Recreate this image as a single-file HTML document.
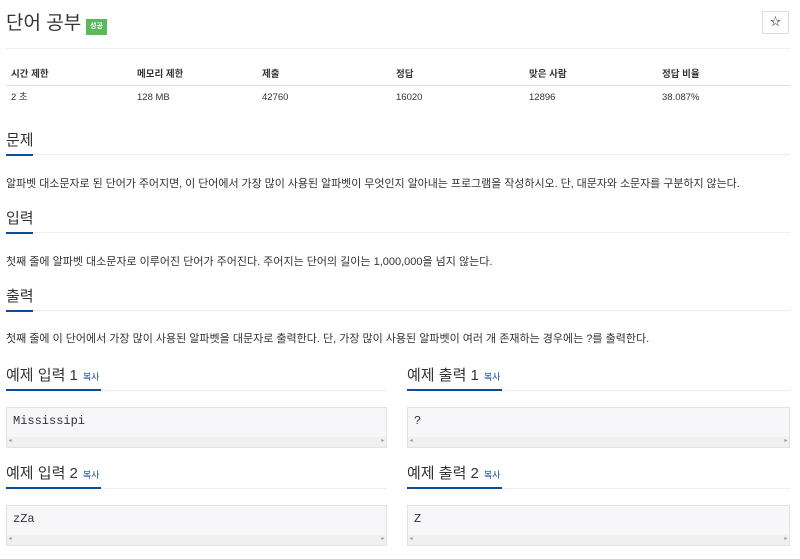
<!DOCTYPE html>
<html><head><meta charset="utf-8"><style>
*{margin:0;padding:0;box-sizing:border-box}
body{width:800px;height:559px;overflow:hidden;background:#fff;font-family:"Liberation Sans","Noto Sans CJK KR",sans-serif;color:#333;position:relative}
.a{position:absolute;white-space:nowrap}
.h{font-size:15px;color:#333;line-height:20px}
.ul{position:absolute;height:2px;background:#0d4c9c}
.gl{position:absolute;height:1px;background:#eee}
.t{font-size:11px;color:#333;line-height:16px}
.th{font-size:9.5px;font-weight:bold;line-height:12px}
.td{font-size:9.5px;line-height:12px}
.box{position:absolute;background:#f7f7f9;border:1px solid #e1e1e8;height:41px}
.box .c{position:absolute;left:6px;top:6px;font-family:"Liberation Mono",monospace;font-size:12px;color:#333}
.box .sb{position:absolute;left:0;right:0;bottom:0;height:10px;background:#f0f0f0;font-size:6px;color:#999}
.cp{font-size:9px;color:#0d4c9c;margin-left:5px}
</style></head><body>
<div class="a" style="left:6px;top:11px;font-size:19px;line-height:26px;color:#333">단어 공부</div>
<div class="a" style="left:86px;top:19px;background:#5cb85c;color:#fff;font-size:7px;font-weight:bold;padding:3px 4px;line-height:10px">성공</div>
<div class="a" style="left:762px;top:11px;width:27px;height:23px;border:1px solid #ddd;text-align:center;font-size:11px;line-height:21px">☆</div>
<div class="gl" style="left:6px;top:48px;width:784px"></div>
<div class="a th" style="left:11px;top:69px">시간 제한</div>
<div class="a th" style="left:137px;top:69px">메모리 제한</div>
<div class="a th" style="left:262px;top:69px">제출</div>
<div class="a th" style="left:396px;top:69px">정답</div>
<div class="a th" style="left:529px;top:69px">맞은 사람</div>
<div class="a th" style="left:662px;top:69px">정답 비율</div>
<div class="gl" style="left:6px;top:85px;width:784px;background:#ddd"></div>
<div class="a td" style="left:11px;top:92px">2 초</div>
<div class="a td" style="left:137px;top:92px">128 MB</div>
<div class="a td" style="left:262px;top:92px">42760</div>
<div class="a td" style="left:396px;top:92px">16020</div>
<div class="a td" style="left:529px;top:92px">12896</div>
<div class="a td" style="left:662px;top:92px">38.087%</div>

<div class="a h" style="left:6px;top:131px">문제</div>
<div class="gl" style="left:6px;top:154px;width:784px"></div><div class="ul" style="left:6px;top:154px;width:27px"></div>
<div class="a t" style="left:6px;top:176px;letter-spacing:-0.05px">알파벳 대소문자로 된 단어가 주어지면, 이 단어에서 가장 많이 사용된 알파벳이 무엇인지 알아내는 프로그램을 작성하시오. 단, 대문자와 소문자를 구분하지 않는다.</div>

<div class="a h" style="left:6px;top:209px">입력</div>
<div class="gl" style="left:6px;top:232px;width:784px"></div><div class="ul" style="left:6px;top:232px;width:27px"></div>
<div class="a t" style="left:6px;top:254px">첫째 줄에 알파벳 대소문자로 이루어진 단어가 주어진다. 주어지는 단어의 길이는 1,000,000을 넘지 않는다.</div>

<div class="a h" style="left:6px;top:287px">출력</div>
<div class="gl" style="left:6px;top:310px;width:784px"></div><div class="ul" style="left:6px;top:310px;width:27px"></div>
<div class="a t" style="left:6px;top:331px">첫째 줄에 이 단어에서 가장 많이 사용된 알파벳을 대문자로 출력한다. 단, 가장 많이 사용된 알파벳이 여러 개 존재하는 경우에는 ?를 출력한다.</div>

<div class="a h" style="left:6px;top:366px">예제 입력 1<span class="cp">복사</span></div>
<div class="gl" style="left:6px;top:390px;width:381px"></div><div class="ul" style="left:6px;top:389px;width:95px"></div>
<div class="box" style="left:6px;top:407px;width:381px"><div class="c">Mississipi</div><div class="sb">&nbsp;◂<span style="float:right">▸&nbsp;</span></div></div>
<div class="a h" style="left:407px;top:366px">예제 출력 1<span class="cp">복사</span></div>
<div class="gl" style="left:407px;top:390px;width:383px"></div><div class="ul" style="left:407px;top:389px;width:95px"></div>
<div class="box" style="left:407px;top:407px;width:383px"><div class="c">?</div><div class="sb">&nbsp;◂<span style="float:right">▸&nbsp;</span></div></div>

<div class="a h" style="left:6px;top:464px">예제 입력 2<span class="cp">복사</span></div>
<div class="gl" style="left:6px;top:488px;width:381px"></div><div class="ul" style="left:6px;top:487px;width:95px"></div>
<div class="box" style="left:6px;top:505px;width:381px"><div class="c">zZa</div><div class="sb">&nbsp;◂<span style="float:right">▸&nbsp;</span></div></div>
<div class="a h" style="left:407px;top:464px">예제 출력 2<span class="cp">복사</span></div>
<div class="gl" style="left:407px;top:488px;width:383px"></div><div class="ul" style="left:407px;top:487px;width:95px"></div>
<div class="box" style="left:407px;top:505px;width:383px"><div class="c">Z</div><div class="sb">&nbsp;◂<span style="float:right">▸&nbsp;</span></div></div>
</body></html>
